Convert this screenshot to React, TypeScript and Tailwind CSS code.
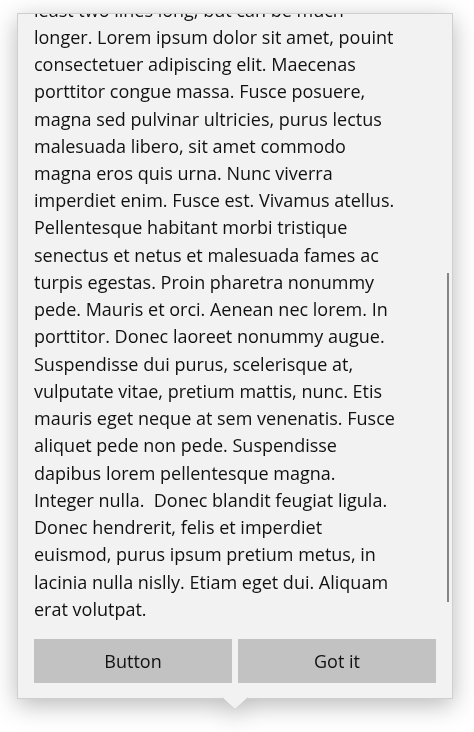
import React from 'react';

// body text, broken where the reference breaks it (scrolled to the end)
const LINES = [
  'least two lines long, but can be much',
  'longer. Lorem ipsum dolor sit amet, pouint',
  'consectetuer adipiscing elit. Maecenas',
  'porttitor congue massa. Fusce posuere,',
  'magna sed pulvinar ultricies, purus lectus',
  'malesuada libero, sit amet commodo',
  'magna eros quis urna. Nunc viverra',
  'imperdiet enim. Fusce est. Vivamus atellus.',
  'Pellentesque habitant morbi tristique',
  'senectus et netus et malesuada fames ac',
  'turpis egestas. Proin pharetra nonummy',
  'pede. Mauris et orci. Aenean nec lorem. In',
  'porttitor. Donec laoreet nonummy augue.',
  'Suspendisse dui purus, scelerisque at,',
  'vulputate vitae, pretium mattis, nunc. Etis',
  'mauris eget neque at sem venenatis. Fusce',
  'aliquet pede non pede. Suspendisse',
  'dapibus lorem pellentesque magna.',
  'Integer nulla.  Donec blandit feugiat ligula.',
  'Donec hendrerit, felis et imperdiet',
  'euismod, purus ipsum pretium metus, in',
  'lacinia nulla nislly. Etiam eget dui. Aliquam',
  'erat volutpat.',
];

export default function App() {
  return (
    <div className="min-h-[732px] bg-white pt-[13px] pl-[17px]" style={{ fontFamily: '"Open Sans", sans-serif' }}>
      <div className="relative flex h-[686px] w-[436px] flex-col border border-[#cfcfcf] bg-[#f2f2f2] drop-shadow-[0_6px_12px_rgba(0,0,0,0.28)]">
        {/* scrolled body, pinned to the end */}
        <div className="flex h-[609px] flex-col justify-end overflow-hidden px-4">
          <div className="shrink-0 text-[18px] leading-[27.24px] text-[#111]">
            {LINES.map((l, i) => (
              <div key={i} className="whitespace-pre">{l}</div>
            ))}
          </div>
        </div>

        <div className="absolute right-[3px] top-[259px] h-[329px] w-[2px] bg-[#858585]" />

        <div className="mt-4 flex gap-[6px] px-4">
          <button className="h-[44px] flex-1 bg-[#c2c2c2] text-[18px] text-[#111]">Button</button>
          <button className="h-[44px] flex-1 bg-[#c2c2c2] text-[18px] text-[#111]">Got it</button>
        </div>

        {/* tail */}
        <svg className="absolute left-1/2 top-full -mt-px -translate-x-1/2" width="26" height="13" viewBox="0 0 26 13">
          <polygon points="0,0 13,12.5 26,0" fill="#f2f2f2" />
          <polyline points="0,0.5 13,12.5 26,0.5" fill="none" stroke="#cfcfcf" strokeWidth="1" />
        </svg>
      </div>
    </div>
  );
}
